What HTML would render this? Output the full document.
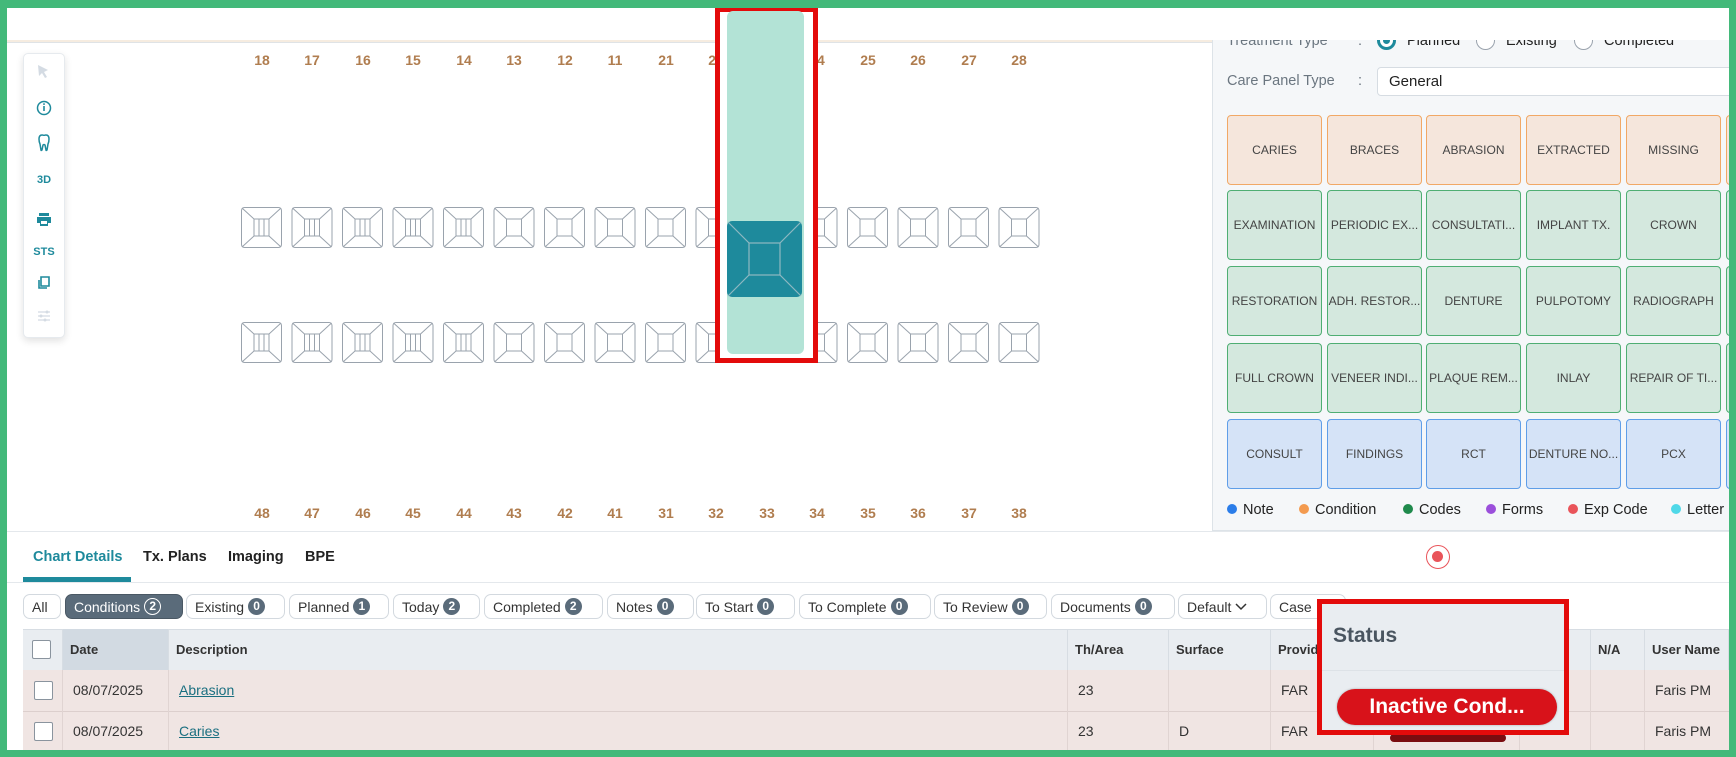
<!DOCTYPE html>
<html><head><meta charset="utf-8"><style>
*{box-sizing:border-box;margin:0;padding:0}
body{width:1736px;height:757px;overflow:hidden;background:#fff;font-family:"Liberation Sans",Arial,sans-serif;position:relative}
.abs{position:absolute}
.frame{position:absolute;left:0;top:0;width:1736px;height:757px;border:8px solid #43b97a;border-left-width:7px;border-right-width:7px;border-bottom-width:7px;z-index:50;pointer-events:none}
.rp{left:1212px;top:40px;width:524px;height:491px;background:#f5f7f9;border-left:1px solid #dde3e8;border-bottom:1px solid #dde3e8}
.btn{position:absolute;width:95px;height:70px;border:1px solid;border-radius:4px;font-size:12px;color:#444;display:flex;align-items:center;justify-content:center;white-space:nowrap;overflow:hidden}
.o{background:#f5e6dc;border-color:#f1a866}.g{background:#d4e8de;border-color:#4fae73}.b{background:#d5e3f7;border-color:#5f9ee8}
.chip{position:absolute;top:594px;height:25px;border:1px solid #d3d9df;border-radius:7px;font-size:14px;color:#333;display:flex;align-items:center;padding-left:8px;background:#fff}
.bd{display:inline-block;width:17px;height:17px;border-radius:50%;background:#5a6b7a;color:#fff;font-size:12px;text-align:center;line-height:17px;margin-left:4px;font-weight:bold}
.th{position:absolute;top:629px;height:41px;font-size:13px;font-weight:bold;color:#333;line-height:41px;padding-left:7px;border-right:1px solid #d7dde3}
.td{position:absolute;height:41px;font-size:14px;color:#333;line-height:41px;padding-left:10px;border-right:1px solid #e0d4d2}
.cb{position:absolute;width:19px;height:19px;border:1px solid #8a949e;border-radius:2px;background:#fff}
.lg{position:absolute;top:502px;font-size:14.5px;color:#222}
.lg i{display:inline-block;width:10px;height:10px;border-radius:50%;margin-right:6px;vertical-align:0}
</style></head><body>
<div class="frame"></div>
<!-- top line -->
<div class="abs" style="left:7px;top:40px;width:1205px;height:2px;background:#f6ece0"></div>
<div class="abs" style="left:7px;top:42px;width:1205px;height:1px;background:#dfe3e6"></div>

<!-- sidebar -->
<div class="abs" style="left:23px;top:53px;width:42px;height:285px;background:#fff;border:1px solid #e6eaee;border-radius:5px;box-shadow:0 3px 8px rgba(0,0,0,.12)"></div>
<svg class="abs" style="left:23px;top:53px" width="42" height="285">
<path d="M15 12 l10 5 -4 2 3 5 -2 1 -3 -5 -3 3z" fill="#d4dbe3"/>
<circle cx="21" cy="55" r="6.5" fill="none" stroke="#1e8a9c" stroke-width="1.5"/><rect x="20.2" y="53" width="1.6" height="5" fill="#1e8a9c"/><rect x="20.2" y="50.3" width="1.6" height="1.6" fill="#1e8a9c"/>
<path d="M16 86 q0 -4 3 -4 q2 0 2 1 q0 -1 2 -1 q3 0 3 4 q0 3 -1 5 l-1 6 q-1 1 -1 0 l-1 -5 q-1 -1 -2 0 l-1 5 q-1 1 -1 0 l-1 -6 q-1 -2 -1 -5z" fill="none" stroke="#1e8a9c" stroke-width="1.5"/>
<text x="21" y="130" text-anchor="middle" font-size="11" font-weight="bold" fill="#1e8a9c" font-family="Liberation Sans">3D</text>
<path d="M16 160 h10 v3 h-10z M14 164 h14 v6 h-3 v3 h-8 v-3 h-3z" fill="#1e8a9c"/><rect x="18" y="168" width="6" height="3" fill="#fff"/>
<text x="21" y="202" text-anchor="middle" font-size="11" font-weight="bold" fill="#1e8a9c" font-family="Liberation Sans">STS</text>
<path d="M18 224 h8 v9 h-8z" fill="none" stroke="#1e8a9c" stroke-width="1.6"/><path d="M16 227 v8 h8" fill="none" stroke="#1e8a9c" stroke-width="1.6"/>
<path d="M15 259 h12 M15 263 h12 M15 267 h12" stroke="#d4dbe3" stroke-width="1.3"/><circle cx="24" cy="259" r="1.5" fill="#d4dbe3"/><circle cx="18" cy="263" r="1.5" fill="#d4dbe3"/><circle cx="22" cy="267" r="1.5" fill="#d4dbe3"/>
</svg>

<!-- teeth -->
<svg class="abs" style="left:0;top:0" width="1212" height="540" font-family="Liberation Sans">
<defs>
<g id="t"><rect x="0.5" y="0.5" width="40" height="40" rx="3" fill="#fff" stroke="#9aa3ad"/><rect x="13" y="12" width="15" height="17" fill="none" stroke="#9aa3ad"/><path d="M1 1 L13 12 M40 1 L28 12 M1 40 L13 29 M40 40 L28 29" stroke="#9aa3ad"/></g>
<g id="m"><use href="#t"/><path d="M18 12 V29 M23 12 V29" stroke="#9aa3ad"/></g>
</defs>
<g font-size="14" font-weight="bold" fill="#b07d4f" text-anchor="middle">
<text x="262" y="65">18</text><text x="312" y="65">17</text><text x="363" y="65">16</text><text x="413" y="65">15</text><text x="464" y="65">14</text><text x="514" y="65">13</text><text x="565" y="65">12</text><text x="615" y="65">11</text><text x="666" y="65">21</text><text x="716" y="65">22</text><text x="767" y="65">23</text><text x="817" y="65">24</text><text x="868" y="65">25</text><text x="918" y="65">26</text><text x="969" y="65">27</text><text x="1019" y="65">28</text>
<text x="262" y="518">48</text><text x="312" y="518">47</text><text x="363" y="518">46</text><text x="413" y="518">45</text><text x="464" y="518">44</text><text x="514" y="518">43</text><text x="565" y="518">42</text><text x="615" y="518">41</text><text x="666" y="518">31</text><text x="716" y="518">32</text><text x="767" y="518">33</text><text x="817" y="518">34</text><text x="868" y="518">35</text><text x="918" y="518">36</text><text x="969" y="518">37</text><text x="1019" y="518">38</text>
</g>
<g transform="translate(0,207)">
<use href="#m" x="241"/><use href="#m" x="291.5"/><use href="#m" x="342"/><use href="#m" x="392.5"/><use href="#m" x="443"/><use href="#t" x="493.5"/><use href="#t" x="544"/><use href="#t" x="594.5"/><use href="#t" x="645"/><use href="#t" x="695.5"/><use href="#t" x="746"/><use href="#t" x="796.5"/><use href="#t" x="847"/><use href="#t" x="897.5"/><use href="#t" x="948"/><use href="#t" x="998.5"/>
</g>
<g transform="translate(0,322)">
<use href="#m" x="241"/><use href="#m" x="291.5"/><use href="#m" x="342"/><use href="#m" x="392.5"/><use href="#m" x="443"/><use href="#t" x="493.5"/><use href="#t" x="544"/><use href="#t" x="594.5"/><use href="#t" x="645"/><use href="#t" x="695.5"/><use href="#t" x="746"/><use href="#t" x="796.5"/><use href="#t" x="847"/><use href="#t" x="897.5"/><use href="#t" x="948"/><use href="#t" x="998.5"/>
</g>
</svg>

<!-- highlighted column -->
<div class="abs" style="left:715px;top:7px;width:103px;height:356px;background:#fff;border:5px solid #e30b0b;z-index:5"></div>
<div class="abs" style="left:727px;top:11px;width:77px;height:343px;background:#b3e3d6;border-radius:6px;z-index:6"></div>
<svg class="abs" style="left:727px;top:221px;z-index:7" width="75" height="76"><rect x="0" y="0" width="75" height="76" rx="5" fill="#1e8a9c"/><rect x="22" y="22" width="31" height="32" fill="none" stroke="#8fb8c2" stroke-width="1.2"/><path d="M1 1 L22 22 M74 1 L53 22 M1 75 L22 54 M74 75 L53 54" stroke="#8fb8c2" stroke-width="1.2"/></svg>

<!-- right panel -->
<div class="abs rp"></div>
<div class="abs" style="left:1212px;top:0;width:524px;height:40px;background:#fff;z-index:2"></div>
<div class="abs" style="left:1227px;top:33px;font-size:14.5px;color:#6b7680;z-index:1">Treatment Type</div>
<div class="abs" style="left:1358px;top:33px;font-size:14.5px;color:#6b7680;z-index:1">:</div>
<div class="abs" style="left:1377px;top:31px;width:19px;height:19px;border:3px solid #1e8a9c;border-radius:50%;z-index:1;background:#fff"><div style="margin:3px;width:7px;height:7px;border-radius:50%;background:#1e8a9c"></div></div>
<div class="abs" style="left:1407px;top:33px;font-size:14.5px;color:#222;z-index:1">Planned</div>
<div class="abs" style="left:1476px;top:31px;width:19px;height:19px;border:1px solid #9aa3ad;border-radius:50%;z-index:1;background:#fff"></div>
<div class="abs" style="left:1506px;top:33px;font-size:14.5px;color:#222;z-index:1">Existing</div>
<div class="abs" style="left:1574px;top:31px;width:19px;height:19px;border:1px solid #9aa3ad;border-radius:50%;z-index:1;background:#fff"></div>
<div class="abs" style="left:1604px;top:33px;font-size:14.5px;color:#222;z-index:1">Completed</div>
<div class="abs" style="left:1227px;top:73px;font-size:14.5px;color:#6b7680">Care Panel Type</div>
<div class="abs" style="left:1358px;top:73px;font-size:14.5px;color:#6b7680">:</div>
<div class="abs" style="left:1377px;top:67px;width:370px;height:29px;background:#fff;border:1px solid #d6dce2;border-radius:4px;font-size:15px;color:#222;padding:5px 0 0 11px">General</div>

<div class="btn o" style="left:1227px;top:115px">CARIES</div><div class="btn o" style="left:1327px;top:115px">BRACES</div><div class="btn o" style="left:1426px;top:115px">ABRASION</div><div class="btn o" style="left:1526px;top:115px">EXTRACTED</div><div class="btn o" style="left:1626px;top:115px">MISSING</div><div class="btn o" style="left:1726px;top:115px"></div>
<div class="btn g" style="left:1227px;top:190px">EXAMINATION</div><div class="btn g" style="left:1327px;top:190px">PERIODIC EX...</div><div class="btn g" style="left:1426px;top:190px">CONSULTATI...</div><div class="btn g" style="left:1526px;top:190px">IMPLANT TX.</div><div class="btn g" style="left:1626px;top:190px">CROWN</div><div class="btn g" style="left:1726px;top:190px"></div>
<div class="btn g" style="left:1227px;top:266px">RESTORATION</div><div class="btn g" style="left:1327px;top:266px">ADH. RESTOR...</div><div class="btn g" style="left:1426px;top:266px">DENTURE</div><div class="btn g" style="left:1526px;top:266px">PULPOTOMY</div><div class="btn g" style="left:1626px;top:266px">RADIOGRAPH</div><div class="btn g" style="left:1726px;top:266px"></div>
<div class="btn g" style="left:1227px;top:343px">FULL CROWN</div><div class="btn g" style="left:1327px;top:343px">VENEER INDI...</div><div class="btn g" style="left:1426px;top:343px">PLAQUE REM...</div><div class="btn g" style="left:1526px;top:343px">INLAY</div><div class="btn g" style="left:1626px;top:343px">REPAIR OF TI...</div><div class="btn g" style="left:1726px;top:343px"></div>
<div class="btn b" style="left:1227px;top:419px">CONSULT</div><div class="btn b" style="left:1327px;top:419px">FINDINGS</div><div class="btn b" style="left:1426px;top:419px">RCT</div><div class="btn b" style="left:1526px;top:419px">DENTURE NO...</div><div class="btn b" style="left:1626px;top:419px">PCX</div><div class="btn b" style="left:1726px;top:419px"></div>

<div class="lg" style="left:1227px"><i style="background:#2b7de9"></i>Note</div>
<div class="lg" style="left:1299px"><i style="background:#f39a4f"></i>Condition</div>
<div class="lg" style="left:1403px"><i style="background:#1f8a4c"></i>Codes</div>
<div class="lg" style="left:1486px"><i style="background:#9b4fdb"></i>Forms</div>
<div class="lg" style="left:1568px"><i style="background:#e9545a"></i>Exp Code</div>
<div class="lg" style="left:1671px"><i style="background:#4fd8e8"></i>Letter</div>

<!-- tabs -->
<div class="abs" style="left:7px;top:531px;width:1722px;height:1px;background:#e4e8ec"></div>
<div class="abs" style="left:33px;top:549px;font-size:14.5px;font-weight:bold;color:#1e8a9c">Chart Details</div>
<div class="abs" style="left:143px;top:549px;font-size:14.5px;font-weight:bold;color:#222">Tx. Plans</div>
<div class="abs" style="left:228px;top:549px;font-size:14.5px;font-weight:bold;color:#222">Imaging</div>
<div class="abs" style="left:305px;top:549px;font-size:14.5px;font-weight:bold;color:#222">BPE</div>
<div class="abs" style="left:23px;top:577px;width:108px;height:5px;background:#1e8a9c"></div>
<div class="abs" style="left:7px;top:582px;width:1722px;height:1px;background:#e4e8ec"></div>
<div class="abs" style="left:1426px;top:545px;width:24px;height:24px;border:1.5px solid #e9545a;border-radius:50%"><div style="margin:5px;width:11px;height:11px;border-radius:50%;background:#e9545a"></div></div>

<!-- chips -->
<div class="chip" style="left:23px;width:38px">All</div>
<div class="chip" style="left:65px;width:118px;background:#5a6b7a;color:#fff;border-color:#4a5864">Conditions<span class="bd" style="background:none;border:1.5px solid #fff;line-height:14px">2</span></div>
<div class="chip" style="left:186px;width:99px">Existing<span class="bd">0</span></div>
<div class="chip" style="left:289px;width:100px">Planned<span class="bd">1</span></div>
<div class="chip" style="left:393px;width:87px">Today<span class="bd">2</span></div>
<div class="chip" style="left:484px;width:119px">Completed<span class="bd">2</span></div>
<div class="chip" style="left:607px;width:87px">Notes<span class="bd">0</span></div>
<div class="chip" style="left:696px;width:99px">To Start<span class="bd">0</span></div>
<div class="chip" style="left:799px;width:132px">To Complete<span class="bd">0</span></div>
<div class="chip" style="left:934px;width:113px">To Review<span class="bd">0</span></div>
<div class="chip" style="left:1051px;width:124px">Documents<span class="bd">0</span></div>
<div class="chip" style="left:1178px;width:89px">Default&nbsp;<svg width="12" height="8"><path d="M1 1 L6 6 L11 1" fill="none" stroke="#333" stroke-width="1.5"/></svg></div>
<div class="chip" style="left:1270px;width:76px">Case</div>

<!-- table -->
<div class="abs" style="left:23px;top:629px;width:1706px;height:41px;background:#e9edf1;border-top:1px solid #d7dde3"></div>
<div class="abs" style="left:63px;top:629px;width:106px;height:41px;background:#d2dae2"></div>
<div class="cb" style="left:32px;top:640px"></div>
<div class="th" style="left:23px;width:40px"></div>
<div class="th" style="left:63px;width:106px">Date</div>
<div class="th" style="left:169px;width:899px">Description</div>
<div class="th" style="left:1068px;width:101px">Th/Area</div>
<div class="th" style="left:1169px;width:102px">Surface</div>
<div class="th" style="left:1271px;width:103px">Provider</div>
<div class="th" style="left:1374px;width:146px"></div>
<div class="th" style="left:1520px;width:71px"></div>
<div class="th" style="left:1591px;width:54px">N/A</div>
<div class="th" style="left:1645px;width:84px">User Name</div>

<div class="abs" style="left:23px;top:670px;width:1706px;height:82px;background:#f0e5e3"></div>
<div class="abs" style="left:23px;top:711px;width:1706px;height:1px;background:#dccfcd"></div>
<div class="cb" style="left:34px;top:681px"></div><div class="cb" style="left:34px;top:722px"></div>
<div class="td" style="left:23px;top:670px;width:40px"></div><div class="td" style="left:63px;top:670px;width:106px">08/07/2025</div><div class="td" style="left:169px;top:670px;width:899px"><u style="color:#1a6f80">Abrasion</u></div><div class="td" style="left:1068px;top:670px;width:101px">23</div><div class="td" style="left:1169px;top:670px;width:102px"></div><div class="td" style="left:1271px;top:670px;width:103px">FAR</div><div class="td" style="left:1374px;top:670px;width:146px"></div><div class="td" style="left:1520px;top:670px;width:71px"></div><div class="td" style="left:1591px;top:670px;width:54px"></div><div class="td" style="left:1645px;top:670px;width:84px;border:0">Faris PM</div>
<div class="td" style="left:23px;top:711px;width:40px"></div><div class="td" style="left:63px;top:711px;width:106px">08/07/2025</div><div class="td" style="left:169px;top:711px;width:899px"><u style="color:#1a6f80">Caries</u></div><div class="td" style="left:1068px;top:711px;width:101px">23</div><div class="td" style="left:1169px;top:711px;width:102px">D</div><div class="td" style="left:1271px;top:711px;width:103px">FAR</div><div class="td" style="left:1374px;top:711px;width:146px"></div><div class="td" style="left:1520px;top:711px;width:71px"></div><div class="td" style="left:1591px;top:711px;width:54px"></div><div class="td" style="left:1645px;top:711px;width:84px;border:0">Faris PM</div>
<div class="abs" style="left:1390px;top:734px;width:116px;height:8px;background:#7a0d10;border-radius:4px"></div>

<!-- status overlay -->
<div class="abs" style="left:1317px;top:599px;width:252px;height:136px;border:5px solid #e30b0b;background:#e9edf1;z-index:10">
<div style="position:absolute;left:11px;top:20px;font-size:21px;font-weight:bold;color:#4a5560">Status</div>
<div style="position:absolute;left:0;top:66px;width:242px;height:1px;background:#dde2e7"></div>
<div style="position:absolute;left:15px;top:85px;width:220px;height:36px;background:#d8121a;border-radius:18px;color:#fff;font-size:21px;font-weight:bold;text-align:center;line-height:36px;box-shadow:0 0 2px rgba(0,0,0,.3)">Inactive Cond...</div>
</div>
</body></html>
